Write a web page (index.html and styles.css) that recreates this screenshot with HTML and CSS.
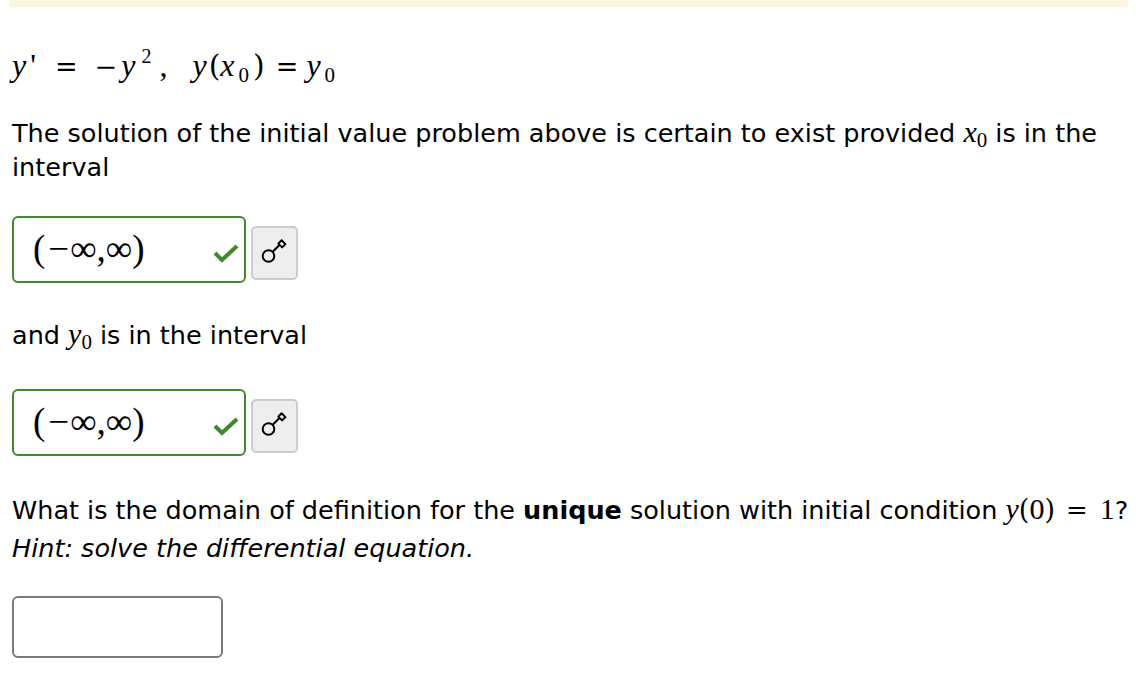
FILE: index.html
```html
<!DOCTYPE html>
<html>
<head>
<meta charset="utf-8">
<link rel="stylesheet" href="styles.css">
</head>
<body>
<div class="topbar"></div>
<div class="content">
  <div class="eqn"><span class="mi">y</span><span class="prime">'</span><span class="op eq1">=</span><span class="op neg">&minus;</span><span class="mi y2">y</span><sup class="sup">2</sup><span class="mn comma">,</span><span class="mi y3">y</span><span class="paren lp">(</span><span class="mi">x</span><sub class="sub s1">0</sub><span class="paren rp">)</span><span class="op eq2">=</span><span class="mi y4">y</span><sub class="sub s2">0</sub></div>
  <p class="para">The solution of the initial value problem above is certain to exist provided <span class="math"><span class="mi">x</span><sub class="sub">0</sub></span> is in the interval</p>
  <div class="answer-row">
    <div class="answer correct">
      <span class="interval">(<span class="minus">&minus;</span>&infin;,&infin;)</span>
      <svg class="check" width="28" height="22" viewBox="0 0 28 22"><path d="M3 11 L10 18 L25 4" fill="none" stroke="#3e8a2a" stroke-width="4"/></svg>
    </div>
    <button class="keybtn"><svg width="28" height="28" viewBox="0 0 28 28"><circle cx="7.5" cy="19" r="5.8" fill="none" stroke="#000" stroke-width="2"/><path d="M11.7 14.8 L18.5 8" fill="none" stroke="#000" stroke-width="2"/><path d="M17.3 6.6 L20.6 3.3 L24.4 7.1 L21.1 10.4 Z" fill="none" stroke="#000" stroke-width="2" stroke-linejoin="round"/></svg></button>
  </div>
  <p class="para p2">and <span class="math"><span class="mi">y</span><sub class="sub">0</sub></span> is in the interval</p>
  <div class="answer-row r2">
    <div class="answer correct">
      <span class="interval">(<span class="minus">&minus;</span>&infin;,&infin;)</span>
      <svg class="check" width="28" height="22" viewBox="0 0 28 22"><path d="M3 11 L10 18 L25 4" fill="none" stroke="#3e8a2a" stroke-width="4"/></svg>
    </div>
    <button class="keybtn"><svg width="28" height="28" viewBox="0 0 28 28"><circle cx="7.5" cy="19" r="5.8" fill="none" stroke="#000" stroke-width="2"/><path d="M11.7 14.8 L18.5 8" fill="none" stroke="#000" stroke-width="2"/><path d="M17.3 6.6 L20.6 3.3 L24.4 7.1 L21.1 10.4 Z" fill="none" stroke="#000" stroke-width="2" stroke-linejoin="round"/></svg></button>
  </div>
  <p class="para q"><span class="nowrap">What is the domain of definition for the <b>unique</b> solution with initial condition <span class="math"><span class="mi">y</span><span class="paren">(</span><span class="mn">0</span><span class="paren">)</span><span class="op eq3">=</span><span class="mn">1</span></span>?</span><br><i>Hint: solve the differential equation.</i></p>
  <div class="answer empty"></div>
</div>
</body>
</html>
```
FILE: styles.css
```css
html, body { margin: 0; padding: 0; background: #fff; }
body {
  font-family: "DejaVu Sans", sans-serif;
  font-size: 25.5px;
  color: #000;
  width: 1136px;
  overflow: hidden;
}
.topbar {
  height: 7px;
  margin: 0 8px 0 10px;
  background: #fdf6df;
}
.content {
  padding: 0 0 0 12px;
  display: flex;
  flex-direction: column;
}
.eqn {
  font-family: "Liberation Serif", serif;
  font-size: 32px;
  margin-top: 38px;
  height: 48px;
  line-height: 40px;
  white-space: nowrap;
}
.mi { font-style: italic; font-family: "Liberation Serif", serif; }
.mn { font-family: "Liberation Serif", serif; font-style: normal; }
.op { font-family: "DejaVu Serif", serif; font-style: normal; font-size: 27px; }
.paren { font-family: "DejaVu Serif", serif; font-style: normal; font-size: 30px; }
.prime { font-family: "Liberation Serif", serif; margin-left: 4px; }
.eq1 { margin-left: 19px; }
.neg { margin-left: 17px; }
.y2 { margin-left: 4px; }
.sup { font-size: 20px; vertical-align: 13px; line-height: 0; margin-left: 6px; font-family: "Liberation Serif", serif; }
.comma { margin-left: 8px; }
.y3 { margin-left: 25px; }
.lp { margin-left: 2px; }
.s1 { margin-left: 4px; }
.rp { margin-left: 4px; }
.eq2 { margin-left: 11px; }
.y4 { margin-left: 8px; }
.s2 { margin-left: 4px; }
.sub { font-size: 21px; vertical-align: -6px; line-height: 0; font-family: "Liberation Serif", serif; }
.math { font-family: "Liberation Serif", serif; font-size: 30px; line-height: 0; }
.math .sub { font-size: 21px; vertical-align: -5px; margin-left: 0; }
.math .paren { font-size: 27px; }
.eq3 { font-size: 26px; margin: 0 12px 0 11px; }
.nowrap { white-space: nowrap; }
.para {
  margin: 23px 0 0 0;
  line-height: 34px;
  width: 1110px;
}
.p2 { margin-top: 35px; }
.q { margin-top: 35px; line-height: 38px; }
.answer-row {
  display: flex;
  align-items: flex-start;
  margin-top: 32px;
  gap: 5px;
}
.r2 { margin-top: 37px; }
.answer {
  width: 228px;
  height: 63px;
  border: 2px solid #777;
  border-radius: 6px;
  box-sizing: content-box;
}
.answer.correct {
  border-color: #3e8a2a;
  display: flex;
  align-items: center;
  justify-content: space-between;
  padding: 0 4px 0 0;
  width: 226px;
}
.interval {
  font-family: "Liberation Serif", serif;
  font-size: 37px;
  margin-left: 19px;
  margin-top: -2px;
  white-space: nowrap;
}
.minus { margin: 0 1px 0 3px; }
.check { margin-top: 6px; }
.keybtn {
  margin-top: 10px;
  width: 47px;
  height: 54px;
  border: 2px solid #ccc;
  border-radius: 5px;
  background: #eee;
  padding: 0 0 4px 0;
  display: flex;
  align-items: center;
  justify-content: center;
}
.answer.empty {
  width: 207px;
  height: 58px;
  margin-top: 29px;
  border-color: #7a7a7a;
}
```
